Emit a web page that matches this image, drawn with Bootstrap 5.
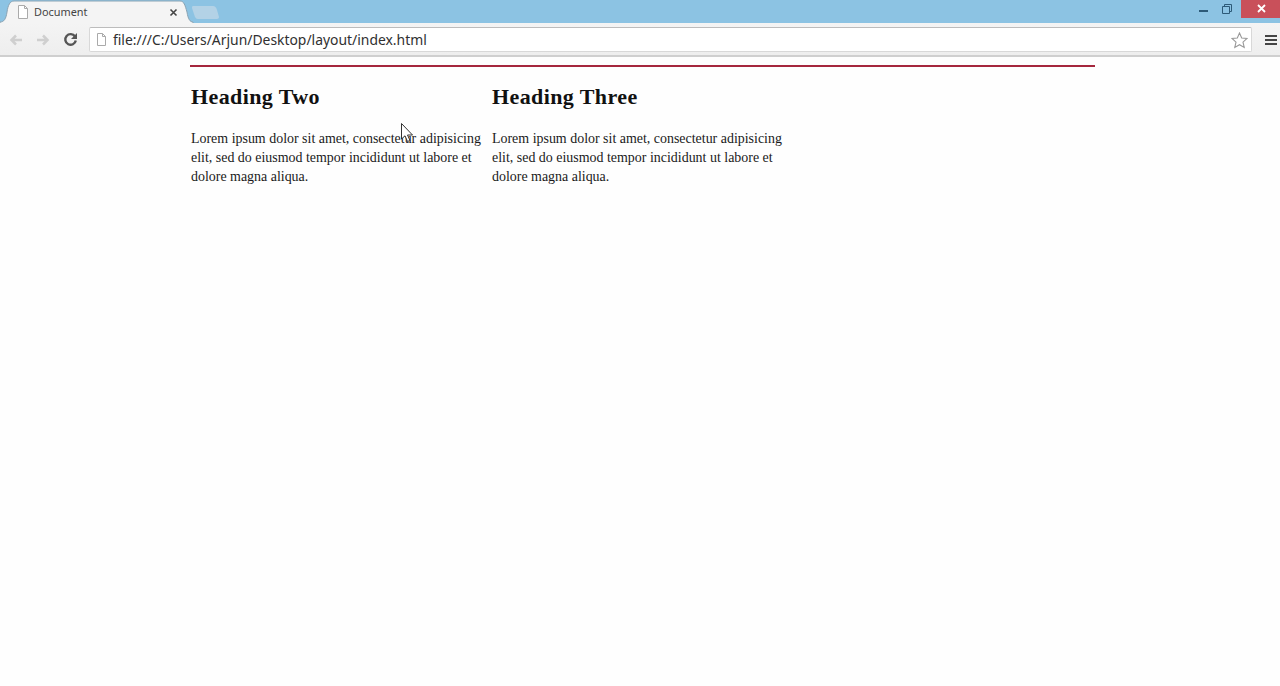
<!DOCTYPE html>
<html lang="en">
<head>
<meta charset="utf-8">
<title>Document</title>
<link rel="stylesheet" href="https://cdn.jsdelivr.net/npm/bootstrap@5.3.0/dist/css/bootstrap.min.css">
<style>
html,body{height:100%;background:#fefefe;overflow:hidden}
body{font-family:"Noto Sans","Liberation Sans",Arial,sans-serif;color:#111}
.tabstrip{height:23px;background:#8cc3e3;position:relative}
.tabshape{position:absolute;left:0;top:0;width:222px;height:24px}
.tabtitle{position:absolute;left:34px;top:5px;font-size:10.9px;line-height:14px;color:#444}
.tabicon{position:absolute}
.toolbar{height:34px;background:linear-gradient(#f4f4f4,#eeeeee);border-bottom:2px solid #cfcfcf;padding-left:89px;padding-right:28px;padding-top:4px}
.omnibox{height:25px;background:#fff;border:1px solid #d8d8d8;border-top-color:#bcbcbc;border-radius:2px;padding-left:23px;font-size:13.9px;line-height:24px;color:#303030}
.pagewrap{width:905px;margin-left:190px;margin-top:8px;border-top:2px solid #a5273d}
.colblock{width:301px;padding-left:1px;padding-right:5px}
.headline{font-family:"Liberation Serif","Times New Roman",serif;font-weight:700;font-size:22px;line-height:25px;margin:17px 0 20px;color:#111;letter-spacing:.4px}
.bodytext{font-family:"Liberation Serif","Times New Roman",serif;font-size:13.95px;line-height:19px;margin:0;color:#1a1a1a}
.cursorpin{position:absolute;left:401px;top:123px}
</style>
</head>
<body class="position-relative">
<div class="tabstrip">
  <svg class="tabshape" viewBox="0 0 222 24"><path d="M0 22C4 22 6 19 7 12 8 5 10 1 14 1H180C184 1 185 5 187 12 188 19 190 22 193 22V24H0Z" fill="#f4f4f4" stroke="#8aa3b3" stroke-width="1"/><path d="M193 6H213C215 6 216 7 217 10L219 17C219 18 218 19 217 19H198C196 19 196 18 195 17L192 8C192 7 192 6 193 6Z" fill="#b3d2e6"/></svg>
  <svg class="tabicon" style="left:17px;top:5px" width="12" height="14" viewBox="0 0 12 14"><path d="M1.500 .5H7.500L10.500 3.500V13.500H1.500Z" fill="#fff" stroke="#aaa"/><path d="M7.500 .5V3.500H10.500" fill="none" stroke="#aaa"/></svg>
  <span class="tabtitle">Document</span>
  <svg class="tabicon" style="left:169px;top:8px" width="9" height="9" viewBox="0 0 9 9"><path d="M1.500 1.500L7.500 7.500M7.500 1.500L1.500 7.500" stroke="#444" stroke-width="1.600"/></svg>
  <svg class="tabicon" style="left:1199px;top:9px" width="9" height="4" viewBox="0 0 9 4"><path d="M0 2H9" stroke="#2d5a78" stroke-width="2"/></svg>
  <svg class="tabicon" style="left:1222px;top:4px" width="10" height="10" viewBox="0 0 10 10"><path d="M.5 2.500H7.500V9.500H.5ZM2.500 2.500V.5H9.500V7.500H7.500" fill="none" stroke="#2d5a78"/></svg>
  <div class="tabicon" style="left:1241px;top:0;width:39px;height:18px;background:#c9505a"></div>
  <svg class="tabicon" style="left:1257px;top:4px" width="9" height="9" viewBox="0 0 9 9"><path d="M1 1L8 8M8 1L1 8" stroke="#fff" stroke-width="1.800"/></svg>
</div>
<div class="toolbar position-relative">
  <svg class="tabicon" style="left:9px;top:11px" width="14" height="12" viewBox="0 0 14 12"><path d="M13 6H3M7 1.500L2.500 6 7 10.500" fill="none" stroke="#cfcfcf" stroke-width="2.500"/></svg>
  <svg class="tabicon" style="left:36px;top:11px" width="14" height="12" viewBox="0 0 14 12"><path d="M1 6H11M7 1.500L11.500 6 7 10.500" fill="none" stroke="#cfcfcf" stroke-width="2.500"/></svg>
  <svg class="tabicon" style="left:63px;top:9px" width="15" height="15" viewBox="0 0 15 15"><path d="M12 4.500A5.300 5.300 0 1 0 12.800 8.500" fill="none" stroke="#555" stroke-width="2.400"/><path d="M14 1V7H8Z" fill="#555"/></svg>
  <div class="omnibox position-relative">
    <svg class="tabicon" style="left:6px;top:5px" width="11" height="13" viewBox="0 0 11 13"><path d="M1.500 .5H6.500L9.500 3.500V12.500H1.500Z" fill="#fff" stroke="#aaa"/><path d="M6.500 .5V3.500H9.500" fill="none" stroke="#aaa"/></svg>
    file:///C:/Users/Arjun/Desktop/layout/index.html
    <svg class="tabicon" style="right:3px;top:4px" width="17" height="17" viewBox="0 0 17 17"><path d="M8.500 1L10.700 6 16 6.500 12 10.100 13.200 15.500 8.500 12.700 3.800 15.500 5 10.100 1 6.500 6.300 6Z" fill="#fff" stroke="#999" stroke-width="1.100"/></svg>
  </div>
  <svg class="tabicon" style="left:1265px;top:11px" width="12" height="12" viewBox="0 0 12 12"><path d="M0 2H12M0 6H12M0 10H12" stroke="#444" stroke-width="2"/></svg>
</div>
<div class="pagewrap">
  <div class="d-flex">
    <div class="colblock">
      <h2 class="headline">Heading Two</h2>
      <p class="bodytext">Lorem ipsum dolor sit amet, consectetur adipisicing elit, sed do eiusmod tempor incididunt ut labore et dolore magna aliqua.</p>
    </div>
    <div class="colblock">
      <h2 class="headline">Heading Three</h2>
      <p class="bodytext">Lorem ipsum dolor sit amet, consectetur adipisicing elit, sed do eiusmod tempor incididunt ut labore et dolore magna aliqua.</p>
    </div>
  </div>
</div>
<svg class="cursorpin" width="13" height="20" viewBox="0 0 13 20"><path d="M.5 .5V16L4 12.800 6.500 18.500 9 17.500 6.500 12H11.500Z" fill="#fff" stroke="#333" stroke-width="1"/></svg>
<script src="https://cdn.jsdelivr.net/npm/bootstrap@5.3.0/dist/js/bootstrap.bundle.min.js"></script>
</body>
</html>
